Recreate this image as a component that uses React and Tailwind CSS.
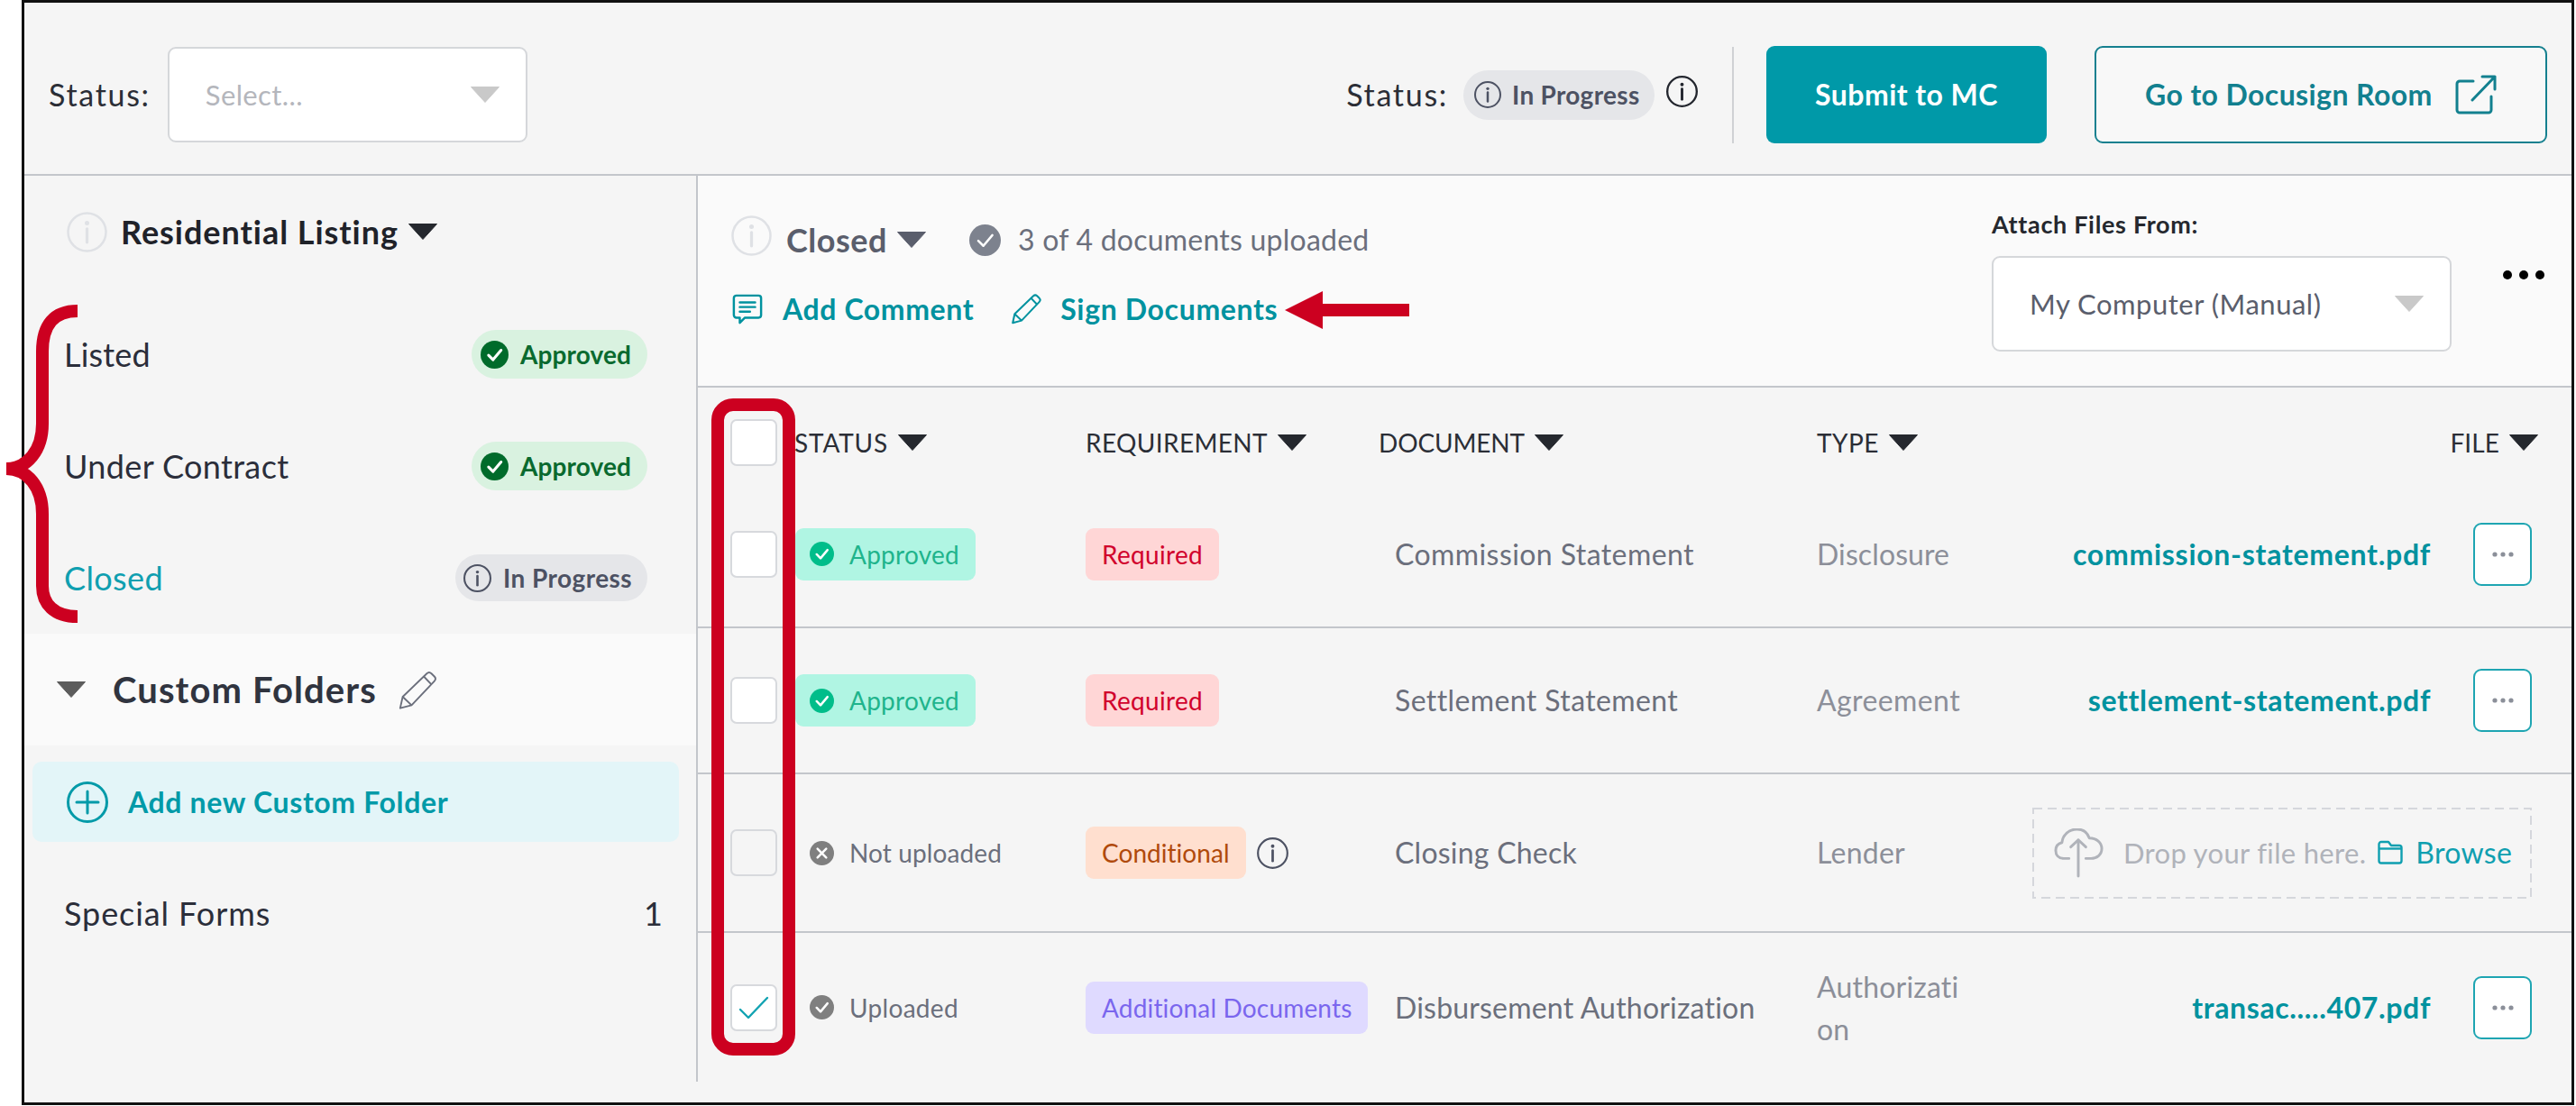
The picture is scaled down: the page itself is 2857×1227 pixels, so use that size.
import React from "react";

const Caret = ({ cls = "text-[#25282e]" }) => (
  <svg viewBox="0 0 34 18" className={`w-[34px] h-[18px] shrink-0 ${cls}`}>
    <path d="M1.5 0.5 H32.5 L17 17.5 Z" fill="currentColor" stroke="currentColor" strokeLinejoin="round" />
  </svg>
);

const Info = ({ size, color, sw = 2.4 }) => (
  <svg viewBox="0 0 36 36" style={{ width: size, height: size }} className="shrink-0" fill="none">
    <circle cx="18" cy="18" r="16.8" stroke={color} strokeWidth={sw} />
    <circle cx="18" cy="10" r="2" fill={color} />
    <path d="M18 15 V27" stroke={color} strokeWidth={sw + 0.6} strokeLinecap="round" />
  </svg>
);

const CheckDot = ({ size = 27, bg, sw = 2.6 }) => (
  <svg viewBox="0 0 28 28" style={{ width: size, height: size }} className="shrink-0">
    <circle cx="14" cy="14" r="14" fill={bg} />
    <path d="M8 14.5 L12.5 19 L20.5 9.5" fill="none" stroke="#fff" strokeWidth={sw} strokeLinecap="round" strokeLinejoin="round" />
  </svg>
);

const XDot = () => (
  <svg viewBox="0 0 28 28" className="w-[27px] h-[27px] shrink-0">
    <circle cx="14" cy="14" r="14" fill="#7f7f7f" />
    <path d="M9 9 L19 19 M19 9 L9 19" fill="none" stroke="#fff" strokeWidth="2.6" strokeLinecap="round" />
  </svg>
);

const Pencil = ({ w, h, color, sw = 2.6 }) => (
  <svg viewBox="0 0 48 48" style={{ width: w, height: h }} className="shrink-0" fill="none" stroke={color} strokeWidth={sw} strokeLinejoin="round">
    <path d="M3 45.5 L6 32 L34.5 4.5 a4 4 0 0 1 5.5 0 l3.5 3.5 a4 4 0 0 1 0 5.5 L16.5 42 Z" />
    <path d="M6 32 L16.5 42 M31 8 L40 17.5" />
  </svg>
);

const Dots3 = () => (
  <svg viewBox="0 0 24 6" className="w-[24px] h-[6px]" fill="#8b8f99">
    <circle cx="3" cy="3" r="2.6" />
    <circle cx="12" cy="3" r="2.6" />
    <circle cx="21" cy="3" r="2.6" />
  </svg>
);

const Check = ({ children, white = true }) => (
  <div className={`w-[52px] h-[52px] rounded-[7px] border-2 border-[#d7d9dd] flex items-center justify-center ${white ? "bg-white" : "bg-transparent"}`}>
    {children}
  </div>
);

const Head = ({ label, tr, cls = "" }) => (
  <div className={`flex items-center gap-[10px] text-[28px] leading-none text-[#2b2e36] ${tr} ${cls}`}>
    <span>{label}</span>
    <Caret />
  </div>
);

const MoreBtn = () => (
  <div className="w-[65px] h-[70px] rounded-[9px] border-2 border-[#1ea5b2] bg-white flex items-center justify-center shrink-0">
    <Dots3 />
  </div>
);

const FileCell = ({ name, tr }) => (
  <div className="flex items-center justify-end gap-[47px]">
    <span className={`text-[32px] font-bold leading-none text-[#00929f] ${tr}`}>{name}</span>
    <MoreBtn />
  </div>
);

const rowCls = "grid grid-cols-[72px_322px_325px_486px_239px_554px] pl-[36px] pr-[44px] items-center";
const docCls = "pl-[18px] text-[32px] leading-none text-[#6b6f7c]";
const typeCls = "text-[32px] leading-none text-[#8c8f99]";
const tagCls = "h-[58px] w-fit px-[18px] rounded-[9px] flex items-center text-[28px] leading-none";
const statusCls = "h-[58px] w-fit pl-[16px] pr-[18px] rounded-[9px] flex items-center gap-[17px] text-[28px] leading-none";

const ApprovedTag = () => (
  <div className={`${statusCls} bg-[#b0f5e3] text-[#1fb48c] tracking-[0.26px]`}>
    <CheckDot bg="#00bd8a" />
    <span>Approved</span>
  </div>
);

const SideRow = ({ label, labelCls, tr, children }) => (
  <div className="h-[124px] pl-[44px] pr-[54px] flex items-center justify-between">
    <span className={`text-[36px] leading-none ${labelCls} ${tr}`}>{label}</span>
    {children}
  </div>
);

const ApprovedPill = () => (
  <div className="h-[54px] w-[195px] pl-[10px] rounded-full bg-[#d9f2e0] flex items-center gap-[13px] text-[28px] font-bold leading-none text-[#0a6a2f] tracking-[0.12px]">
    <CheckDot size={31} bg="#006b2b" sw={2.8} />
    <span>Approved</span>
  </div>
);

export default function App() {
  return (
    <div className="relative w-[2857px] h-[1227px] bg-white font-[Lato,sans-serif] overflow-hidden">
      <div className="ml-[24px] w-[2831px] h-[1226px] border-[3px] border-[#111] bg-[#f5f5f5]">
        {/* top bar */}
        <div className="h-[192px] border-b-2 border-[#c3c6cb] pt-[14px] pl-[27px] pr-[27px] flex items-center">
          <span className="text-[34px] leading-none text-[#2b2e36] tracking-[1.7px] mr-[19px]">Status:</span>
          <div className="w-[399px] h-[106px] bg-white rounded-[9px] border-2 border-[#d5d7da] flex items-center pl-[40px] pr-[28px] justify-between">
            <span className="text-[31px] leading-none text-[#b4b6bc] tracking-[0.38px]">Select...</span>
            <Caret cls="text-[#c9c9c9]" />
          </div>
          <div className="ml-auto flex items-center">
            <span className="text-[34px] leading-none text-[#2b2e36] tracking-[1.7px] mr-[17px]">Status:</span>
            <div className="w-[212px] h-[55px] pl-[12px] rounded-full bg-[#e5e6e9] flex items-center gap-[12px] text-[28px] font-bold leading-none text-[#4d5263] tracking-[0.3px]">
              <Info size={30} color="#4d5263" sw={2.4} />
              <span>In Progress</span>
            </div>
            <div className="ml-[13px] -mt-[8px]">
              <Info size={35} color="#23262e" sw={2.4} />
            </div>
            <div className="w-[2px] h-[107px] bg-[#cfd1d4] ml-[38px] mr-[36px]" />
            <div className="w-[311px] h-[108px] rounded-[9px] bg-[#0099a8] flex items-center justify-center text-[32px] font-bold leading-none text-white tracking-[0.45px]">
              Submit to MC
            </div>
            <div className="ml-[53px] w-[502px] h-[108px] rounded-[9px] border-2 border-[#15808f] bg-[#f8f8f8] flex items-center pl-[54px] gap-[25px] text-[32px] font-bold leading-none text-[#12808f] tracking-[0.4px]">
              <span>Go to Docusign Room</span>
              <svg viewBox="0 0 46 44" className="w-[46px] h-[44px] shrink-0" fill="none" stroke="#12808f" strokeWidth="3" strokeLinejoin="round" strokeLinecap="round">
                <path d="M20 7 H5 a3 3 0 0 0 -3 3 V39 a3 3 0 0 0 3 3 H37 a3 3 0 0 0 3 -3 V24" />
                <path d="M19 28 L44 2 M30 2 H44 V16" />
              </svg>
            </div>
          </div>
        </div>

        {/* body */}
        <div className="flex h-[1005px]">
          {/* sidebar */}
          <div className="w-[747px] shrink-0 border-r-2 border-[#c3c6cb] flex flex-col">
            <div className="h-[136px] pb-[12px] pl-[47px] flex items-center">
              <Info size={45} color="#dfe1e5" sw={2} />
              <span className="ml-[15px] text-[36px] font-bold leading-none text-[#1f2229] tracking-[0.95px]">Residential Listing</span>
              <span className="ml-[10px]"><Caret /></span>
            </div>
            <SideRow label="Listed" labelCls="text-[#2b2e3a]" tr="tracking-[0.2px]"><ApprovedPill /></SideRow>
            <SideRow label="Under Contract" labelCls="text-[#2b2e3a]" tr="tracking-[0.36px]"><ApprovedPill /></SideRow>
            <SideRow label="Closed" labelCls="text-[#0f9fb0]" tr="tracking-[0.38px]">
              <div className="h-[52px] w-[213px] pl-[9px] rounded-full bg-[#e5e6e9] flex items-center gap-[13px] text-[28px] font-bold leading-none text-[#4d5263] tracking-[0.44px]">
                <Info size={31} color="#4d5263" sw={2.4} />
                <span>In Progress</span>
              </div>
            </SideRow>
            <div className="h-[124px] bg-[#fafafa] pl-[35px] flex items-center">
              <Caret cls="text-[#5c5c5c]" />
              <span className="ml-[29px] text-[40px] font-bold leading-none text-[#30343f] tracking-[1.1px]">Custom Folders</span>
              <span className="ml-[22px]"><Pencil w={47} h={45} color="#6b6f7c" sw={2} /></span>
            </div>
            <div className="mt-[18px] ml-[9px] w-[717px] h-[89px] rounded-[10px] bg-[#e3f5f8] pl-[38px] flex items-center gap-[22px]">
              <svg viewBox="0 0 46 46" className="w-[46px] h-[46px] shrink-0" fill="none" stroke="#009aa8" strokeWidth="3" strokeLinecap="round">
                <circle cx="23" cy="23" r="21.5" />
                <path d="M23 11 V35 M11 23 H35" />
              </svg>
              <span className="text-[32px] font-bold leading-none text-[#009aa8] tracking-[0.65px]">Add new Custom Folder</span>
            </div>
            <div className="h-[158px] pl-[44px] pr-[37px] flex items-center justify-between text-[36px] leading-none text-[#2b2e3a]">
              <span className="tracking-[0.92px]">Special Forms</span>
              <span>1</span>
            </div>
          </div>

          {/* main */}
          <div className="flex-1 min-w-0 flex flex-col">
            <div className="h-[235px] bg-[#fafafa] border-b-2 border-[#c3c6cb] pl-[37px] pr-[30px] flex items-start">
              <div className="pt-[53px]">
                <div className="h-[36px] flex items-center">
                  <div className="-mt-[10px]"><Info size={45} color="#dfe1e5" sw={2} /></div>
                  <span className="ml-[16px] text-[36px] font-bold leading-none text-[#5a5e6c] tracking-[0.5px]">Closed</span>
                  <span className="ml-[10px]"><Caret cls="text-[#5a5e6c]" /></span>
                  <span className="ml-[47px]"><CheckDot size={35} bg="#7d828e" sw={2} /></span>
                  <span className="ml-[19px] text-[32px] leading-none text-[#6b6f7c] tracking-[0.23px]">3 of 4 documents uploaded</span>
                </div>
                <div className="mt-[41px] h-[35px] flex items-center text-[32px] font-bold leading-none text-[#00929f]">
                  <svg viewBox="0 0 36 36" className="w-[36px] h-[34px] shrink-0" fill="none" stroke="#00929f" strokeWidth="2.6" strokeLinejoin="round" strokeLinecap="round">
                    <path d="M5 2 H31 a3 3 0 0 1 3 3 V25 a3 3 0 0 1 -3 3 H15 L9 34 V28 H5 a3 3 0 0 1 -3 -3 V5 a3 3 0 0 1 3 -3 Z" />
                    <path d="M9 10 H27 M9 15.5 H27 M9 21 H21" />
                  </svg>
                  <span className="ml-[21px] tracking-[0.6px]">Add Comment</span>
                  <span className="ml-[41px]"><Pencil w={35} h={35} color="#00929f" sw={2.8} /></span>
                  <span className="ml-[20px] tracking-[0.65px]">Sign Documents</span>
                </div>
              </div>
              <div className="ml-auto pt-[35px]">
                <div className="h-[36px] flex items-center text-[27px] font-bold leading-none text-[#25282e] tracking-[0.67px]">Attach Files From:</div>
                <div className="mt-[18px] w-[510px] h-[106px] bg-white rounded-[9px] border-2 border-[#d5d7da] pl-[40px] pr-[28px] flex items-center justify-between">
                  <span className="text-[31px] leading-none text-[#5a5e6c] tracking-[0.51px]">My Computer (Manual)</span>
                  <Caret cls="text-[#c9c9c9]" />
                </div>
              </div>
              <div className="ml-[57px] mt-[105px] flex gap-[8px]">
                <span className="w-[10px] h-[10px] rounded-full bg-black" />
                <span className="w-[10px] h-[10px] rounded-full bg-black" />
                <span className="w-[10px] h-[10px] rounded-full bg-black" />
              </div>
            </div>

            {/* header row */}
            <div className={`${rowCls} h-[104px] pt-[18px]`}>
              <Check />
              <Head label="STATUS" tr="tracking-[0.82px]" cls="-ml-[1px]" />
              <Head label="REQUIREMENT" tr="tracking-[0.37px]" />
              <Head label="DOCUMENT" tr="tracking-[-0.14px]" />
              <Head label="TYPE" tr="tracking-[0.5px]" />
              <Head label="FILE" tr="tracking-[0.1px]" cls="justify-end -mr-[8px]" />
            </div>

            {/* row 1 */}
            <div className={`${rowCls} h-[163px] border-b-2 border-[#c3c6cb]`}>
              <Check />
              <ApprovedTag />
              <div className={`${tagCls} bg-[#ffd6d6] text-[#d1002c] tracking-[0.31px]`}>Required</div>
              <div className={`${docCls} tracking-[0.42px]`}>Commission Statement</div>
              <div className={`${typeCls} tracking-[0.1px]`}>Disclosure</div>
              <FileCell name="commission-statement.pdf" tr="tracking-[0.72px]" />
            </div>

            {/* row 2 */}
            <div className={`${rowCls} h-[162px] border-b-2 border-[#c3c6cb]`}>
              <Check />
              <ApprovedTag />
              <div className={`${tagCls} bg-[#ffd6d6] text-[#d1002c] tracking-[0.31px]`}>Required</div>
              <div className={`${docCls} tracking-[0.39px]`}>Settlement Statement</div>
              <div className={`${typeCls} tracking-[0.4px]`}>Agreement</div>
              <FileCell name="settlement-statement.pdf" tr="tracking-[0.62px]" />
            </div>

            {/* row 3 */}
            <div className={`${rowCls} h-[176px] border-b-2 border-[#c3c6cb]`}>
              <Check white={false} />
              <div className={`${statusCls} text-[#6b6f7c] tracking-[0.11px]`}>
                <XDot />
                <span>Not uploaded</span>
              </div>
              <div className="flex items-center gap-[12px]">
                <div className={`${tagCls} bg-[#ffdfcf] text-[#b04a0c] tracking-[0.04px]`}>Conditional</div>
                <Info size={35} color="#4d5263" sw={2.2} />
              </div>
              <div className={`${docCls} tracking-[0.23px]`}>Closing Check</div>
              <div className={`${typeCls} tracking-[0.25px]`}>Lender</div>
              <div className="relative h-[101px] pl-[24px] flex items-center leading-none">
                <svg className="absolute inset-0 w-full h-full" fill="none">
                  <rect x="1" y="1" width="552" height="99" stroke="#d5d7dc" strokeWidth="2" strokeDasharray="10 6" />
                </svg>
                <svg viewBox="0 0 56 56" className="w-[55px] h-[55px] shrink-0" fill="none" stroke="#b0b3ba" strokeWidth="3" strokeLinecap="round" strokeLinejoin="round">
                  <path d="M17 34 H11 C5 34 2 30 2 25 C2 20 5 17 9 16 C10 7 17 1 26 1 C33 1 38 5 40 11 C48 11 54 16 54 23 C54 30 48 34 42 34 H36" />
                  <path d="M27.5 54 V13 M19 21 L27.5 13 L36 21" />
                </svg>
                <span className="ml-[22px] text-[31px] text-[#b0b3ba] tracking-[0.32px]">Drop your file here.</span>
                <svg viewBox="0 0 28 28" className="ml-[13px] w-[28px] h-[28px] shrink-0" fill="none" stroke="#0f9fb0" strokeWidth="2.4" strokeLinejoin="round">
                  <path d="M4 2 H12 L15 6 H24 a2.5 2.5 0 0 1 2.5 2.5 V23 a2.5 2.5 0 0 1 -2.5 2.5 H4 a2.5 2.5 0 0 1 -2.5 -2.5 V4.5 A2.5 2.5 0 0 1 4 2 Z" />
                  <path d="M1.5 9.5 H26.5" />
                </svg>
                <span className="ml-[14px] text-[32px] text-[#0f9fb0] tracking-[0.33px]">Browse</span>
              </div>
            </div>

            {/* row 4 */}
            <div className={`${rowCls} flex-1`}>
              <Check>
                <svg viewBox="0 0 34 26" className="w-[34px] h-[26px]" fill="none" stroke="#12a3b2" strokeWidth="2.4" strokeLinecap="round" strokeLinejoin="round">
                  <path d="M2 15 L11 24 L32 2" />
                </svg>
              </Check>
              <div className={`${statusCls} text-[#6b6f7c] tracking-[0.32px]`}>
                <CheckDot bg="#7f7f7f" />
                <span>Uploaded</span>
              </div>
              <div className={`${tagCls} bg-[#dfdaff] text-[#7a66ee] tracking-[0.17px]`}>Additional Documents</div>
              <div className={`${docCls} tracking-[0.2px]`}>Disbursement Authorization</div>
              <div className="text-[32px] leading-[47px] text-[#8c8f99] tracking-[0.2px]">
                Authorizati<br />on
              </div>
              <FileCell name="transac.....407.pdf" tr="tracking-[0.63px]" />
            </div>
          </div>
        </div>
      </div>

      {/* annotations drawn over the screenshot */}
      <svg viewBox="0 0 100 360" className="absolute left-0 top-[335px] w-[100px] h-[360px]" fill="none" stroke="#cc0020" strokeWidth="14">
        <path d="M86 10 C60 10 47 25 47 55 L47 135 C47 165 30 185 7 185 C30 185 47 205 47 235 L47 315 C47 335 60 349 86 349" />
      </svg>
      <div className="absolute left-[789px] top-[442px] w-[93px] h-[729px] rounded-[24px] border-[14px] border-[#cc0020]" />
      <svg viewBox="0 0 138 42" className="absolute left-[1425px] top-[323px] w-[138px] h-[42px]">
        <polygon points="0,21 42,0 42,14 138,14 138,28 42,28 42,42" fill="#cc0020" />
      </svg>
    </div>
  );
}
